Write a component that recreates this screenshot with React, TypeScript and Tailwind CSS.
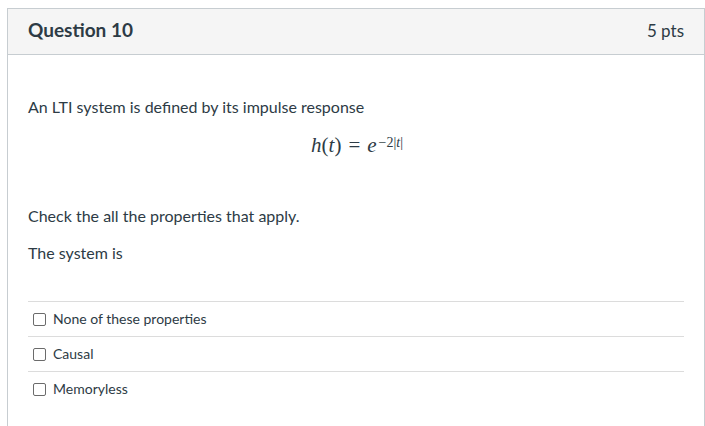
import React from 'react';

const ANSWERS = ['None of these properties', 'Causal', 'Memoryless'];

const Formula: React.FC = () => (
  <div className="flex justify-center h-[24px] items-center mt-[14px] mb-[47px]">
    <span className="text-[21px] text-[#2d3b45] leading-none whitespace-nowrap pl-[2px]" style={{ fontFamily: '"Liberation Serif", "DejaVu Serif", serif' }}>
      <i>h</i>(<i>t</i>)<span className="mx-[7px]">=</span><i>e</i>
      <sup className="text-[14px] relative -top-[5px] ml-[2px]">−2|<i>t</i>|</sup>
    </span>
  </div>
);

export default function App() {
  return (
    <div className="bg-white min-h-[426px] pt-[8px] pl-[7px] overflow-hidden" style={{ fontFamily: 'Lato, "Noto Sans", sans-serif' }}>
      <div className="w-[698px] h-[418px] border-l border-r border-t border-[#c7cdd1] bg-white">
        <div className="h-[46px] bg-[#f5f5f5] border-b border-[#c7cdd1] flex items-center justify-between px-[20px] text-[#2d3b45]">
          <span className="text-[19px] font-bold -mt-[2px]">Question 10</span>
          <span className="text-[17px] -mt-[1px]">5 pts</span>
        </div>
        <div className="px-[20px] pt-[40px] text-[#2d3b45]">
          <p className="text-[16px] leading-[24px]">An LTI system is defined by its impulse response</p>
          <Formula />
          <p className="text-[16px] leading-[24px]">Check the all the properties that apply.</p>
          <p className="text-[16px] leading-[24px] mt-[13px]">The system is</p>
          <div className="mt-[36px]">
            {ANSWERS.map((a) => (
              <div key={a} className="h-[35px] border-t border-[#dcdcdc] flex items-center pl-[5px] gap-[7px]">
                <span className="w-[13px] h-[13px] border border-[#6b6b6b] rounded-[2px] bg-white" />
                <span className="text-[14px] -mt-[1px]">{a}</span>
              </div>
            ))}
          </div>
        </div>
      </div>
    </div>
  );
}
